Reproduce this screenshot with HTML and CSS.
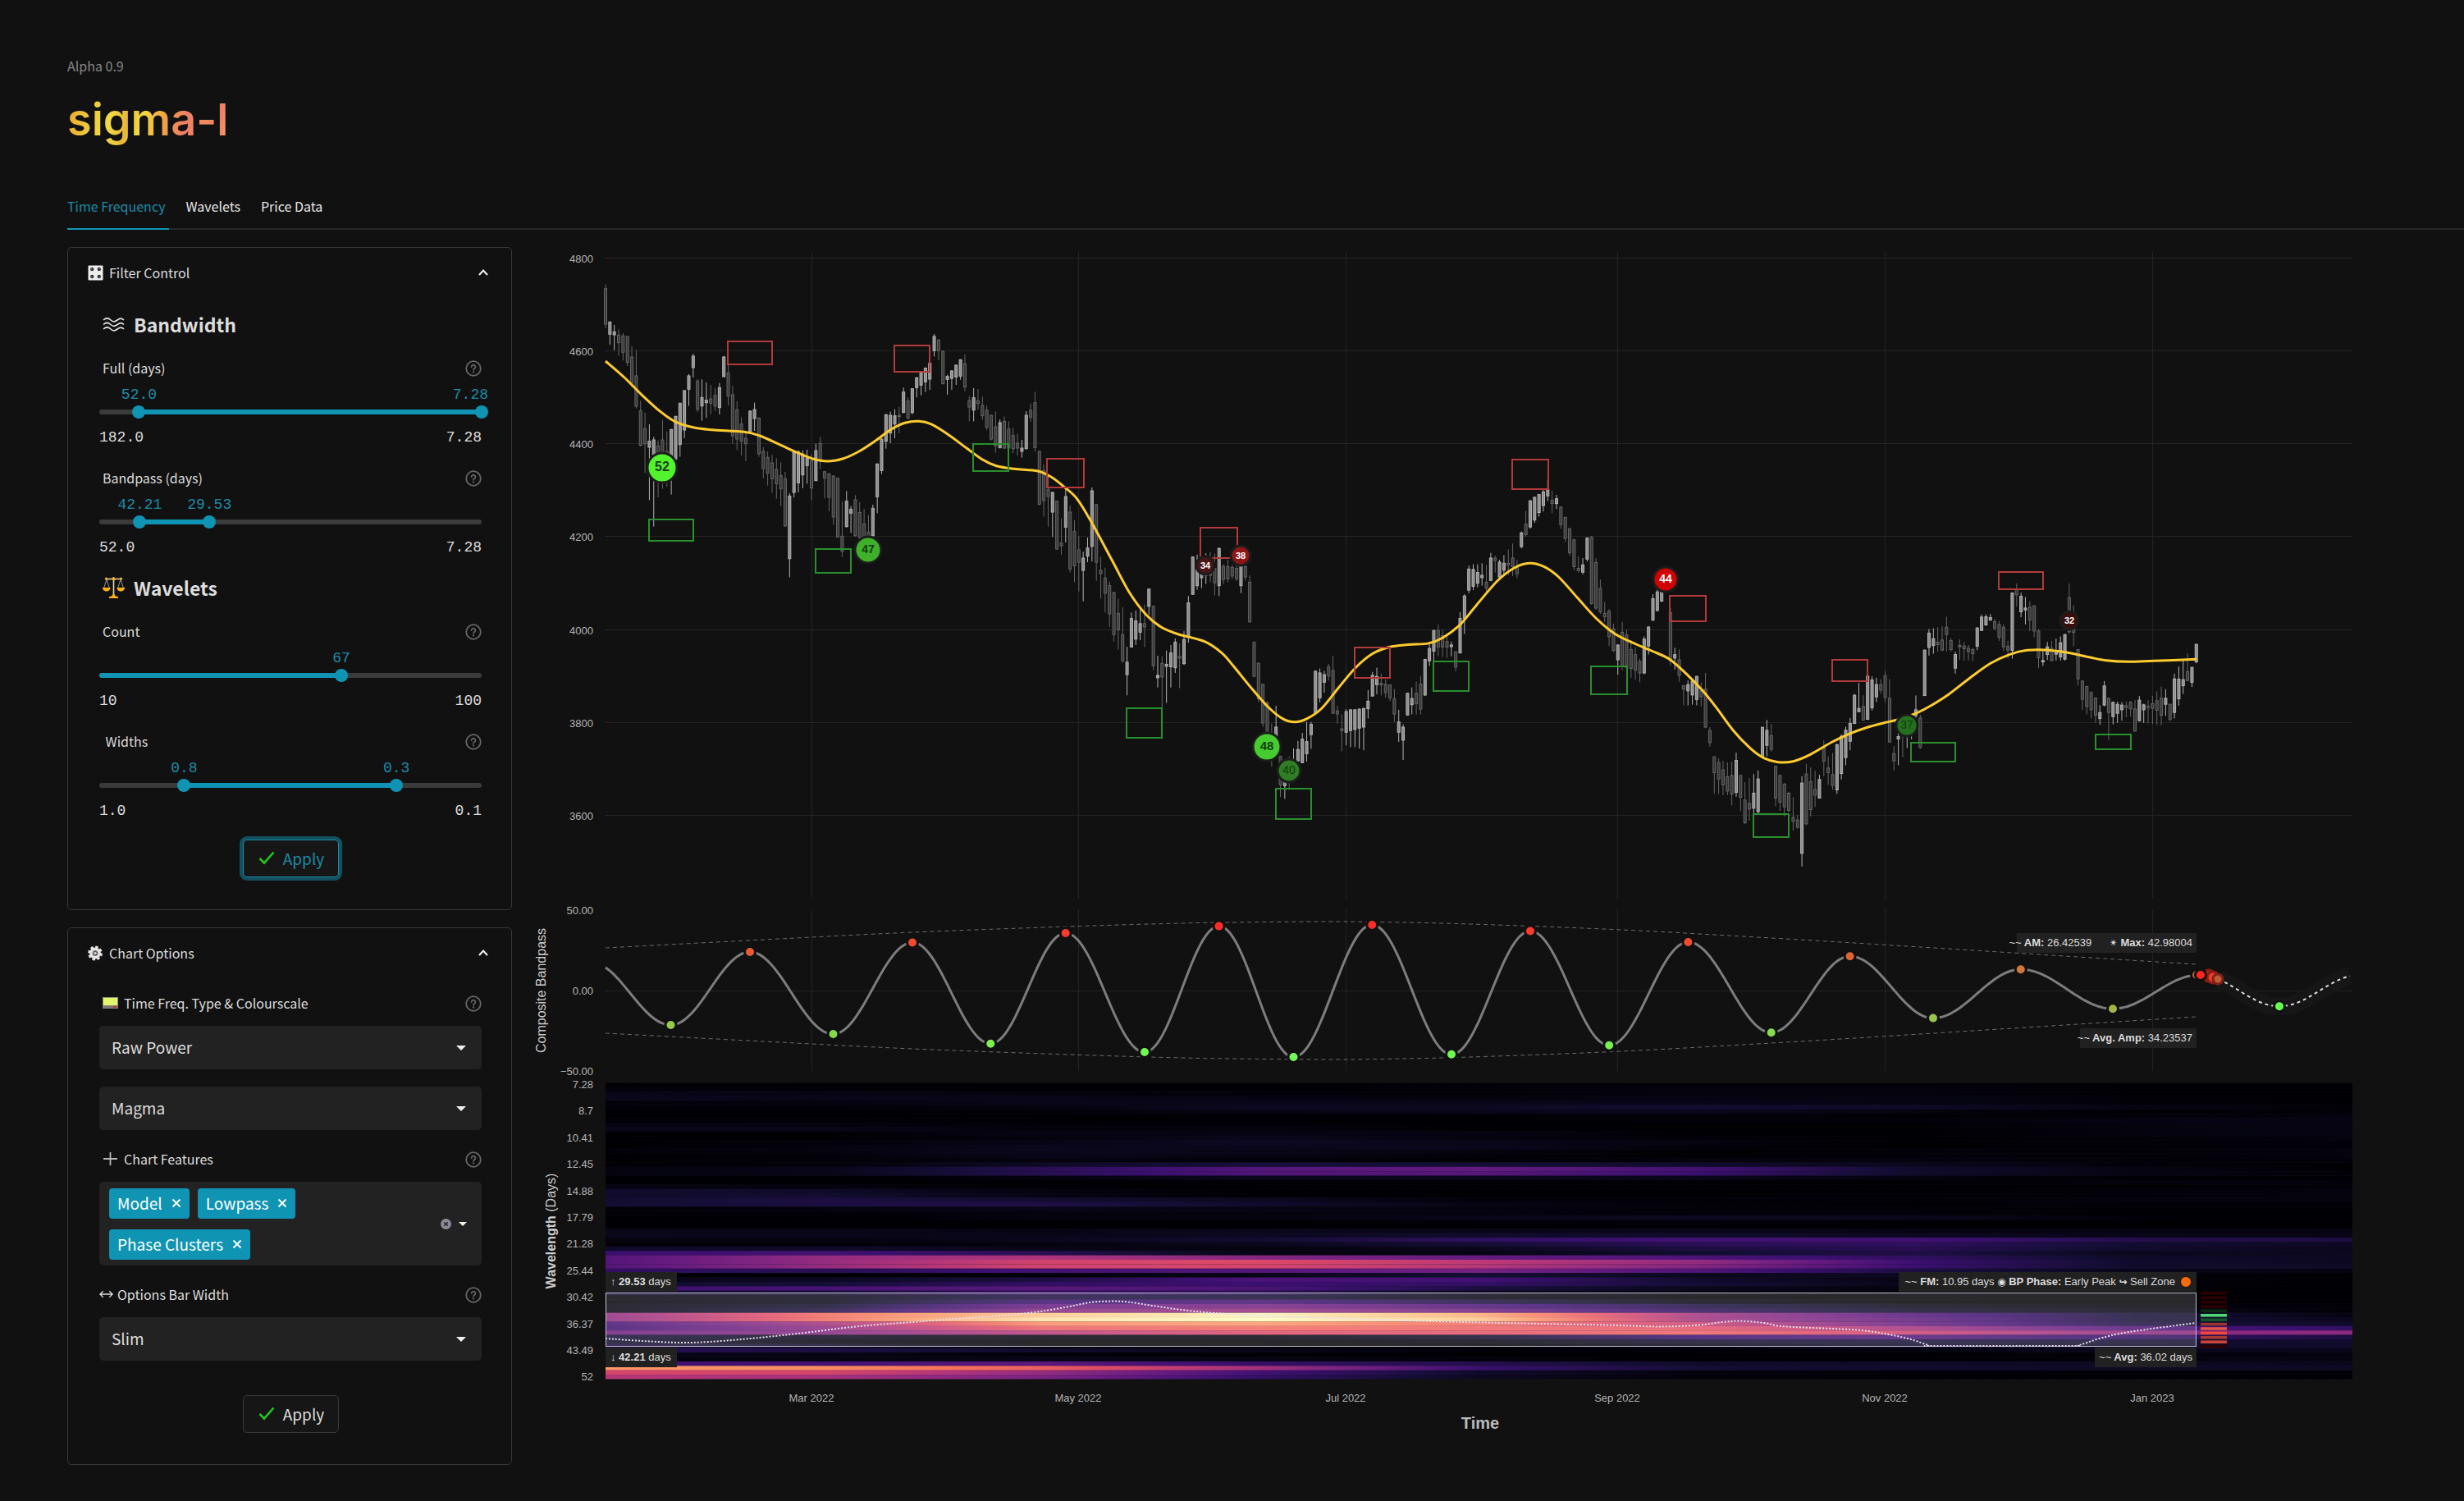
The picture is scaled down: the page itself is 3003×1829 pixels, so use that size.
FILE: index.html
```
<!DOCTYPE html>
<html lang="en">
<head>
  <meta charset="UTF-8" />
  <meta name="viewport" content="width=device-width, initial-scale=1.0"/>
  <title>sigma-l</title>
  <link rel="stylesheet" href="styles.css">
</head>
<body>

<svg width="0" height="0" class="defs" aria-hidden="true">
  <symbol id="help" viewBox="0 0 20 20">
    <circle cx="10" cy="10" r="8.8" fill="none" stroke="currentColor" stroke-width="1.8"/>
    <path d="M7.6 8.1a2.4 2.4 0 1 1 3.7 2c-.9.5-1.3.9-1.3 1.7" fill="none" stroke="currentColor" stroke-width="1.7" stroke-linecap="round"/>
    <circle cx="10" cy="14.4" r="1.1" fill="currentColor"/>
  </symbol>
  <symbol id="chevron" viewBox="0 0 14 10">
    <path d="M2 8l5-5.4L12 8" fill="none" stroke="currentColor" stroke-width="2.2"/>
  </symbol>
  <symbol id="caret" viewBox="0 0 12 6"><path d="M0 0h12L6 6z" fill="currentColor"/></symbol>
  <symbol id="cross" viewBox="0 0 12 12"><path d="M1.5 1.5l9 9m0-9l-9 9" fill="none" stroke="currentColor" stroke-width="1.9"/></symbol>
  <symbol id="check" viewBox="0 0 20 18">
    <path d="M1.5 10l5.5 5.5L18.5 2.5" fill="none" stroke="#1fc71f" stroke-width="2.6"/>
  </symbol>
</svg>

<header class="header">
  <p class="version">Alpha 0.9</p>
  <h1 class="logo">sigma-l</h1>
</header>

<nav class="tabs">
  <a class="tab active" href="#time-frequency">Time Frequency</a>
  <a class="tab" href="#wavelets">Wavelets</a>
  <a class="tab" href="#price-data">Price Data</a>
</nav>

<main class="main">
  <aside class="sidebar">

    <details class="panel" open>
      <summary>
        <svg class="icon-title" viewBox="0 0 19 19">
          <rect x=".5" y=".5" width="18" height="18" rx="1" fill="#eee"/>
          <g fill="#333"><circle cx="5.2" cy="5" r="2.2"/><circle cx="13.8" cy="5" r="2.2"/><circle cx="5.2" cy="14" r="2.2"/><circle cx="13.8" cy="14" r="2.2"/></g>
          <path d="M5 5l-2-2M14 5l2-2M5 14l-2 2M14 14l2 2" stroke="#999" stroke-width="1"/>
        </svg>
        Filter Control
        <svg class="chevron"><use href="#chevron"/></svg>
      </summary>
      <div class="panel-body">

        <h2>
          <svg class="icon-section" viewBox="0 0 27 28">
            <g fill="none" stroke="#ddd" stroke-width="1.7">
              <path d="M1 9c3-3 6-3 9 0s5 2 8 0 5-3 8 0"/>
              <path d="M1 14.5c3-3 6-3 9 0s5 2 8 0 5-3 8 0"/>
              <path d="M1 20c3-3 6-3 9 0s5 2 8 0 5-3 8 0"/>
            </g>
          </svg>
          Bandwidth
        </h2>

        <div class="field">
          <div class="field-label"><label for="full-min">Full (days)</label><svg class="help"><use href="#help"/></svg></div>
          <div class="values"><output style="left:10.4%">52.0</output><output class="at-end">7.28</output></div>
          <div class="slider">
            <div class="fill" style="left:10.4%;width:89.6%"></div>
            <input type="range" id="full-min" min="0" max="100" step="0.1" value="10.4">
            <input type="range" aria-label="Full (days), end" min="0" max="100" step="0.1" value="100">
          </div>
          <div class="limits"><span>182.0</span><span>7.28</span></div>
        </div>

        <div class="field">
          <div class="field-label"><label for="band-min">Bandpass (days)</label><svg class="help"><use href="#help"/></svg></div>
          <div class="values"><output style="left:10.6%">42.21</output><output style="left:28.8%">29.53</output></div>
          <div class="slider">
            <div class="fill" style="left:10.6%;width:18.2%"></div>
            <input type="range" id="band-min" min="0" max="100" step="0.1" value="10.6">
            <input type="range" aria-label="Bandpass (days), end" min="0" max="100" step="0.1" value="28.8">
          </div>
          <div class="limits"><span>52.0</span><span>7.28</span></div>
        </div>

        <h2>
          <svg class="icon-section" viewBox="0 0 27 28">
            <path d="M13.5 1v23M4 3.5h19" stroke="#e8dcc0" stroke-width="1.6"/>
            <path d="M5 4L1.5 15M5 4l3.5 11M22 4l-3.5 11M22 4l3.5 11" stroke="#99978f" stroke-width="1" fill="none"/>
            <g fill="#fbb017"><path d="M0 14h9.500c0 6-9.500 6-9.500 0zM17.500 14h9.500c0 6-9.500 6-9.500 0zM8 27v-2c3 0 4-1 4.500-3h2c.5 2 1.500 3 4.500 3v2z"/><circle cx="4.5" cy="3.2" r="1.6"/><circle cx="22.5" cy="3.2" r="1.6"/><circle cx="13.5" cy="3.5" r="2"/></g>
          </svg>
          Wavelets
        </h2>

        <div class="field">
          <div class="field-label"><label for="count">Count</label><svg class="help"><use href="#help"/></svg></div>
          <div class="values"><output style="left:63.3%">67</output></div>
          <div class="slider">
            <div class="fill" style="left:0;width:63.3%"></div>
            <input type="range" id="count" min="10" max="100" value="67">
          </div>
          <div class="limits"><span>10</span><span>100</span></div>
        </div>

        <div class="field">
          <div class="field-label"><label for="widths-min">&nbsp;Widths</label><svg class="help"><use href="#help"/></svg></div>
          <div class="values"><output style="left:22.2%">0.8</output><output style="left:77.7%">0.3</output></div>
          <div class="slider">
            <div class="fill" style="left:22.2%;width:55.5%"></div>
            <input type="range" id="widths-min" min="0" max="100" step="0.1" value="22.2">
            <input type="range" aria-label="Widths, end" min="0" max="100" step="0.1" value="77.7">
          </div>
          <div class="limits"><span>1.0</span><span>0.1</span></div>
        </div>

        <button type="button" class="apply focused"><svg class="check"><use href="#check"/></svg>Apply</button>
      </div>
    </details>

    <details class="panel options" open>
      <summary>
        <svg class="icon-title" viewBox="0 0 19 19">
          <circle cx="9" cy="9.5" r="7.4" fill="none" stroke="#e6e6e6" stroke-width="3" stroke-dasharray="3.4 2.41"/>
          <circle cx="9" cy="9.5" r="5.2" fill="#777" stroke="#e6e6e6" stroke-width="3.4"/>
          <circle cx="9" cy="9.5" r="2.2" fill="#ccc" stroke="#555" stroke-width="1"/>
        </svg>
        Chart Options
        <svg class="chevron"><use href="#chevron"/></svg>
      </summary>
      <div class="panel-body">

        <div class="field-label">
          <label for="tf-type">
            <svg class="icon-label" viewBox="0 0 19 14"><rect width="19" height="14" fill="#8c8f7a"/><rect x="1" y="1" width="17" height="9" fill="#e3f56b"/><path d="M0 12h19" stroke="#777" stroke-width="3"/><rect x="13" y="11" width="4" height="2" fill="#b33"/></svg>
            Time Freq. Type &amp; Colourscale
          </label>
          <svg class="help"><use href="#help"/></svg>
        </div>
        <div class="select"><select id="tf-type"><option>Raw Power</option></select><svg class="caret"><use href="#caret"/></svg></div>
        <div class="select second"><select aria-label="Colourscale"><option>Magma</option></select><svg class="caret"><use href="#caret"/></svg></div>

        <div class="field-label spaced">
          <span id="features-label">
            <svg class="icon-label" viewBox="0 0 19 18"><path d="M9.5 0v18M0 9h19" stroke="#b8b8b8" stroke-width="2"/></svg>
            Chart Features
          </span>
          <svg class="help"><use href="#help"/></svg>
        </div>
        <div class="multi" role="group" aria-labelledby="features-label">
          <div class="tags">
            <span class="tag">Model<button type="button" aria-label="Remove Model"><svg><use href="#cross"/></svg></button></span>
            <span class="tag">Lowpass<button type="button" aria-label="Remove Lowpass"><svg><use href="#cross"/></svg></button></span>
            <span class="tag">Phase Clusters<button type="button" aria-label="Remove Phase Clusters"><svg><use href="#cross"/></svg></button></span>
          </div>
          <button type="button" class="clear" aria-label="Clear all"><svg viewBox="0 0 14 14"><circle cx="7" cy="7" r="7" fill="#8b8b99"/><path d="M4.5 4.5l5 5m0-5l-5 5" stroke="#222" stroke-width="1.5"/></svg></button>
          <svg class="caret small"><use href="#caret"/></svg>
        </div>

        <div class="field-label spaced flush">
          <label for="bar-width">
            <svg class="icon-label arrow" viewBox="0 0 18 10"><path d="M1 5h16M5 1L1 5l4 4M13 1l4 4-4 4" fill="none" stroke="#ddd" stroke-width="1.4"/></svg>
            Options Bar Width
          </label>
          <svg class="help"><use href="#help"/></svg>
        </div>
        <div class="select"><select id="bar-width"><option>Slim</option></select><svg class="caret"><use href="#caret"/></svg></div>

        <button type="button" class="apply"><svg class="check"><use href="#check"/></svg>Apply</button>
      </div>
    </details>

  </aside>

  <svg id="chart" class="chart" viewBox="648 301 2255 1460" role="img" aria-label="Price, composite bandpass and time frequency charts"></svg>
</main>

<script src="chart.js"></script>
</body>
</html>
```
FILE: styles.css
```
* {
  box-sizing: border-box;
}

body {
  margin: 0;
  background: #111111;
  color: #dddddd;
  font-family: "Noto Sans CJK SC", "Open Sans", sans-serif;
  font-size: 16px;
  line-height: 24px;
}

.defs {
  position: absolute;
}

.header {
  padding: 68px 82px 0;
}

.version {
  margin: 0;
  color: #888888;
}

.logo {
  display: inline-block;
  margin: 16px 0 0;
  font-family: Inter, sans-serif;
  font-size: 54px;
  font-weight: 600;
  line-height: 76px;
  color: transparent;
  background: linear-gradient(100deg, #e8a32c 0%, #eec63a 14%, #f0da45 28%, #e9b636 38%, #f2dc3f 46%, #f0a240 60%, #ee7f63 72%, #f08a5e 84%, #f07f62 92%, #f0b060 100%);
  background-clip: text;
  -webkit-background-clip: text;
}

/* tabs */

.tabs {
  display: flex;
  gap: 21px;
  margin: 52px 0 0 82px;
  border-bottom: 2px solid #282828;
}

.tab {
  height: 44px;
  margin-bottom: -2px;
  padding: 3px 4px 0 0;
  color: #e6e6e6;
  text-decoration: none;
}

.tab.active {
  color: #1c8ba8;
  border-bottom: 2px solid #1094b4;
}

.main {
  display: flex;
  align-items: flex-start;
  gap: 24px;
  padding: 21px 100px 42px 82px;
}

.sidebar {
  flex: 0 0 542px;
}

.chart {
  flex: 1;
  min-width: 0;
  display: block;
  font-family: "Liberation Sans", Arial, sans-serif;
  font-size: 13px;
}

/* panels */

.panel {
  margin-bottom: 21px;
  border: 1px solid #383838;
  border-radius: 5px;
}

.panel:last-child {
  margin-bottom: 0;
}

summary {
  display: flex;
  align-items: center;
  gap: 7px;
  height: 62px;
  padding: 0 27px 2px 24px;
  list-style: none;
  cursor: pointer;
}

.panel-body {
  padding: 16px 36px 39px 38px;
}

.options .panel-body {
  padding: 18px 36px 38px 38px;
}

.icon-title {
  width: 19px;
  height: 19px;
}

.chevron {
  width: 14px;
  height: 10px;
  margin-left: auto;
  color: #eeeeee;
}

h2 {
  display: flex;
  align-items: center;
  gap: 11px;
  height: 32px;
  margin: 0 0 25px;
  padding: 0 0 2px 4px;
  font-size: 23px;
  font-weight: 700;
}

.field + h2 {
  margin-top: 24px;
}

.icon-section {
  width: 27px;
  height: 28px;
}

/* sliders */

.field + .field {
  margin-top: 28px;
}

.field-label {
  display: flex;
  align-items: center;
  justify-content: space-between;
  height: 24px;
  padding-left: 4px;
}

.field-label label,
.field-label span {
  display: flex;
  align-items: center;
  gap: 7px;
  padding-bottom: 3px;
}

.field-label.flush {
  padding-left: 0;
}

.field-label.spaced {
  margin-top: 24px;
}

.help {
  width: 20px;
  height: 20px;
  color: #666666;
}

.icon-label {
  width: 19px;
  height: 16px;
}

.icon-label.arrow {
  width: 17px;
}

.flush label {
  gap: 5px;
}

.values {
  position: relative;
  height: 20px;
  margin-top: 10px;
}

.values output {
  position: absolute;
  transform: translateX(-50%);
  color: #1c8ba8;
}

.values output.at-end {
  right: -8px;
  transform: none;
}

.values,
.limits {
  font-family: "Liberation Mono", monospace;
  font-size: 18px;
  line-height: 20px;
}

.slider {
  position: relative;
  height: 20px;
}

.slider::before,
.fill {
  content: "";
  position: absolute;
  top: 8px;
  height: 6px;
  border-radius: 3px;
}

.slider::before {
  left: 0;
  width: 100%;
  background: #3b3b3b;
}

.fill {
  background: #1094b4;
}

.slider input {
  position: absolute;
  top: 1px;
  left: -8px;
  width: calc(100% + 16px);
  height: 20px;
  margin: 0;
  background: none;
  appearance: none;
  -webkit-appearance: none;
  pointer-events: none;
}

.slider input::-webkit-slider-thumb {
  width: 16px;
  height: 16px;
  border-radius: 50%;
  background: #1094b4;
  appearance: none;
  -webkit-appearance: none;
  pointer-events: auto;
}

.limits {
  display: flex;
  justify-content: space-between;
  margin-top: 12px;
}

/* selects */

.select {
  position: relative;
  margin-top: 15px;
}

.select.second {
  margin-top: 21px;
}

select {
  display: block;
  width: 100%;
  height: 53px;
  padding: 0 15px 2px;
  border: 0;
  border-radius: 5px;
  background: #222222;
  color: #dddddd;
  font-family: inherit;
  font-size: 19px;
  appearance: none;
  -webkit-appearance: none;
}

.caret {
  position: absolute;
  top: 24px;
  right: 19px;
  width: 12px;
  height: 6px;
  color: #eeeeee;
  pointer-events: none;
}

.caret.small {
  position: static;
  width: 10px;
  height: 5px;
}

.multi {
  display: flex;
  align-items: center;
  gap: 9px;
  min-height: 102px;
  margin-top: 15px;
  padding: 6px 18px 6px 12px;
  border-radius: 5px;
  background: #222222;
}

.tags {
  flex: 1;
  display: flex;
  flex-wrap: wrap;
  gap: 13px 10px;
  padding-right: 120px;
}

.tag {
  display: flex;
  align-items: center;
  gap: 11px;
  height: 37px;
  padding: 0 10px 1px;
  border-radius: 4px;
  background: #1094b4;
  color: #ffffff;
  font-size: 19px;
}

.tag button,
.clear {
  display: flex;
  padding: 0;
  border: 0;
  background: none;
  color: inherit;
}

.tag svg {
  width: 12px;
  height: 12px;
}

.clear svg {
  width: 13px;
  height: 13px;
}

.apply {
  display: flex;
  align-items: center;
  justify-content: center;
  gap: 10px;
  width: 117px;
  height: 46px;
  margin: 25px auto 0;
  padding: 0 0 2px 2px;
  border: 1px solid #3a3a3a;
  border-radius: 5px;
  background: #161616;
  color: #dddddd;
  font-family: inherit;
  font-size: 19px;
}

.options .apply {
  margin-top: 42px;
}

.apply.focused {
  border-color: #1c8ba8;
  color: #1c8ba8;
  box-shadow: 0 0 0 4px #12505f;
}

.check {
  width: 20px;
  height: 18px;
}

/* chart */

.chart text {
  fill: #b4b4b4;
}

.grid {
  stroke: #242424;
  stroke-width: 1;
}

.chart .axis-title {
  font-size: 16px;
  fill: #cccccc;
}

.chart .time-title {
  font-size: 20px;
  font-weight: 700;
  fill: #bbbbbb;
}

.up {
  fill: #8e8e8e;
  stroke: #b4b4b4;
}

.down {
  fill: #3a3a3a;
  stroke: #666666;
}

.lowpass {
  fill: none;
  stroke: #fccb2e;
  stroke-width: 3;
}

.sell {
  fill: none;
  stroke: #b23a3a;
  stroke-width: 2;
}

.buy {
  fill: none;
  stroke: #28902c;
  stroke-width: 2;
}

.wave {
  fill: none;
  stroke: #7d7d7d;
  stroke-width: 3;
}

.envelope {
  fill: none;
  stroke: #6c6c6c;
  stroke-dasharray: 5 4;
}

.forecast {
  fill: none;
  stroke: #dddddd;
  stroke-width: 2;
  stroke-dasharray: 4 4;
}

.forecast-band {
  fill: none;
  stroke: #161616;
  stroke-width: 22;
}

.band {
  fill: #ffffff;
  fill-opacity: 0.16;
  stroke: #c4bccc;
  stroke-width: 1;
}

.mean-freq {
  fill: none;
  stroke: #eadff0;
  stroke-width: 2;
  stroke-dasharray: 2 2;
}

.note {
  fill: #212121;
}

.chart .note-text {
  fill: #dddddd;
  white-space: pre;
}

.note-text tspan {
  font-weight: 700;
}

.note-text .sign {
  font-family: "DejaVu Sans", sans-serif;
  font-size: 12px;
}
```
FILE: chart.js
```
const svg = document.getElementById('chart');
const X0 = 738, DAY = 5.341, RIGHT = 2867;

const dayX = d => X0 + d * DAY;
const priceY = p => 315.3 + (4800 - p) * 0.566;

function add(tag, attrs, text, parent) {
  const el = document.createElementNS('http://www.w3.org/2000/svg', tag);
  for (const k in attrs) el.setAttribute(k, attrs[k]);
  if (text !== undefined) el.textContent = text;
  (parent || svg).appendChild(el);
  return el;
}

function path(points) {
  let d = 'M' + points[0];
  for (let i = 0; i < points.length - 1; i++) {
    const a = points[i - 1] || points[i], b = points[i], c = points[i + 1], e = points[i + 2] || c;
    d += `C${b[0] + (c[0] - a[0]) / 6} ${b[1] + (c[1] - a[1]) / 6} ${c[0] - (e[0] - b[0]) / 6} ${c[1] - (e[1] - b[1]) / 6} ${c[0]} ${c[1]}`;
  }
  return d;
}

const pairs = s => s.trim().split(/\s+/).map(p => p.split(',').map(Number));

// grid and axis labels
const months = [[989, 'Mar 2022'], [1314, 'May 2022'], [1640, 'Jul 2022'], [1971, 'Sep 2022'], [2297, 'Nov 2022'], [2623, 'Jan 2023']];
months.forEach(([x, label]) => {
  add('path', { class: 'grid', d: `M${x}.5 307V1095M${x}.5 1108V1305` });
  add('text', { x, y: 1708, 'text-anchor': 'middle' }, label);
});
for (let p = 4800; p >= 3600; p -= 200) {
  const y = Math.floor(priceY(p)) - 0.5;
  add('path', { class: 'grid', d: `M${X0} ${y}H${RIGHT}` });
  add('text', { x: 723, y: Math.round(y + 5), 'text-anchor': 'end' }, p);
}
add('path', { class: 'grid', d: `M${X0} 1207.5H${RIGHT}` });
[['50.00', 1114], ['0.00', 1212], ['−50.00', 1310]].forEach(([t, y]) => add('text', { x: 723, y, 'text-anchor': 'end' }, t));

// candles: high, body top, body bottom, low in steps below the base price
const segments = [
  { day: 0, base: 4844.8, step: 0.5891, rows: `170 185 315 330 d,305 307 352 390 u,318 343 354 410 u,334 355 383 430 d,348 358 418 448 d,358 360 455 468 d,395 435 530 545 d,410 504 615 623 d,595 632 758 762 d,638 697 752 860 d,681 743 765 958 u,727 738 880 1055 u,740 760 860 948 d,665 738 880 917 d,707 780 870 910 d,698 700 850 938 u,650 652 808 870 u,602 604 755 800 u,556 558 702 732 u,498 504 553 614 u,423 432 474 510 u,516 523 626 636 d,517 583 614 668 u,528 593 602 657 u,537 588 604 645 d,548 575 614 632 d,530 547 620 645 u,431 435 507 508 u,455 493 578 612 d,540 573 723 752 d,597 628 735 775 d,655 680 742 795 d,705 732 752 815 d,630 633 707 712 u,602 627 660 705 u,656 658 788 800 d,765 780 843 878 d,780 802 860 905 d,792 822 880 932 d,805 846 898 953 d,820 868 917 980 d,855 880 1052 1057 d,933 943 1172 1240 u,780 783 930 948 u,776 782 895 930 u,776 790 866 915 u,774 806 832 898 u,790 815 914 958 d,752 777 887 888 u,727 751 815 845 d,852 854 878 952 d,860 862 948 998 d,868 870 1020 1048 d,876 878 1093 1095 d,963 1090 1145 1166 d,925 962 1055 1058 u,980 992 1006 1078 u,940 957 1088 1092 d,965 1003 1095 1100 d,990 1045 1095 1100 d,1013 1075 1100 1110 d,975 988 1088 1095 u,824 826 946 1006 u,733 735 850 863 u,643 646 743 770 u,635 648 713 750 u,626 650 680 732 u,617 648 653 714 d,547 563 638 640 u,583 596 658 662 d,549 551 638 645 u,508 511 547 583 u,488 492 538 575 u,473 476 526 563 u,455 458 516 555 u,351 360 412 433 u,370 373 412 447 d,410 415 533 535 d,500 506 517 573 u,483 486 513 555 u,462 465 508 537 u,443 445 505 518 u,426 460 545 560 d,578 594 618 670 d,549 584 629 670 u,552 595 605 628 d,580 612 650 665 d,613 630 692 703 d,645 648 735 740 d,635 690 760 785 d,663 675 767 768 u,652 670 768 772 d,670 698 768 775 d,694 722 770 787 d,715 750 768 795 d,738 768 780 803 u,633 648 770 773 u,605 630 655 672 d,562 602 766 782 d,778 780 973 978 d,828 850 960 1018 d,868 920 945 1055 d,928 930 1002 1093 u,960 962 1137 1140 d,1025 1115 1125 1158 d,912 945 1057 1113 u,978 1002 1210 1222 d,1032 1072 1198 1258 d,1090 1140 1185 1292 d,1147 1170 1215 1328 u,1095 1133 1163 1185 u,912 924 1127 1182 u,972 975 1185 1253 d,1165 1215 1227 1318 d` },
  { day: 114, base: 4579, step: 0.7427, rows: `598 628 672 728 d,638 650 732 770 d,668 670 792 812 d,688 730 778 835 d,712 792 868 873 d,827 872 908 968 u,728 745 828 829 u,722 752 805 822 u,720 760 785 808 u,705 760 770 828 d,658 660 710 735 u,708 710 882 895 d,853 910 917 945 u,855 875 915 1028 d,838 878 884 990 u,822 845 885 945 u,803 814 888 903 u,818 855 860 947 d,782 806 876 880 u,680 700 798 815 u,565 567 675 677 u,560 600 650 662 u,575 585 627 657 u,556 580 620 645 u,553 570 620 640 d,557 600 642 678 d,540 542 650 680 u,588 594 632 645 d,575 595 630 640 d,590 597 622 632 d,560 600 630 637 d,560 585 650 672 u,580 595 625 635 d,620 640 755 757 d,812 814 913 915 d,873 875 978 988 d,934 936 1048 1060 d,985 990 1075 1078 d,1050 1080 1150 1175 d,998 1060 1100 1120 u,1143 1145 1227 1263 d,1160 1175 1230 1268 u,1145 1170 1215 1242 d,1122 1160 1180 1200 u,1100 1125 1158 1160 u,1077 1095 1163 1165 u,1045 1102 1137 1160 u,1045 1052 1082 1123 u,896 898 1018 1020 u,890 903 975 988 u,897 908 930 960 u,877 885 912 925 d,853 896 1020 1022 d,998 1013 1022 1050 d,1023 1065 1070 1130 d,1008 1015 1075 1113 u,1008 1010 1070 1118 u,1008 1010 1067 1118 u,1006 1008 1063 1122 u,1004 1006 1060 1127 u,953 985 1007 1035 u,900 910 970 972 u,888 913 937 965 u,905 933 938 968 d,922 936 960 975 d,936 938 975 985 d,950 978 1022 1045 d,1010 1045 1075 1103 u,1052 1060 1098 1155 u,960 962 1025 1027 u,945 977 995 1023 u,928 962 992 1023 d,912 935 1008 1023 d,862 864 967 970 u,818 832 868 883 u,778 780 840 873 u,763 780 828 855 d,778 795 828 857 d,790 812 828 860 d,812 822 827 855 u,840 842 886 898 d,727 745 845 847 u,675 680 745 790 u,592 602 663 672 u,588 603 652 663 u,588 612 643 655 u,585 620 627 650 u,590 640 657 672 d,555 570 635 637 u,563 570 577 612 d,575 582 625 628 u,562 585 605 622 u,545 585 590 620 d,528 570 595 622 d,575 595 615 628 d,493 497 537 542 u,433 472 502 508 d,402 404 480 485 u,392 394 460 468 u,384 386 438 450 u,373 378 418 435 u,343 372 390 405 u,375 402 412 440 d,387 398 412 428 u,420 422 473 485 d,450 452 513 523 d,483 485 555 563 d,515 517 595 605 d,565 600 606 612 d,570 590 611 617 u,510 512 573 580 u,506 510 702 705 d,570 583 715 720 d,632 658 726 732 d,697 730 740 755 d,718 724 798 825 d,760 775 838 842 d,820 822 865 908 u,755 785 885 895 d,778 793 887 905 d,808 835 890 917 d,828 850 895 923 d,862 870 903 930 d,797 805 903 907 u,767 770 825 850 u,675 688 750 752 u,655 668 722 725 u,645 655 695 697 u,640 645 665 667 d,715 728 868 882 d,830 850 860 893 u,835 865 910 928 d,938 940 950 997 d,925 937 955 997 u,920 927 967 995 u,912 913 980 997 u,930 955 972 1000 d,903 950 1060 1063 d,1060 1070 1105 1117 d` },
  { day: 253, base: 4367.8, step: 0.5888, rows: `1085 1087 1145 1222 d,1093 1108 1168 1223 d,1102 1135 1190 1227 d,1107 1160 1212 1227 d,1105 1155 1223 1265 d,1072 1100 1217 1233 u,1153 1155 1235 1285 d,1180 1245 1328 1332 d,1165 1257 1278 1320 d,1150 1220 1275 1300 u,1137 1168 1288 1293 u,978 979 1085 1090 u,952 990 1045 1085 u,967 1010 1060 1068 d,1120 1122 1238 1267 d,1152 1155 1253 1285 d,1183 1187 1270 1305 d,1215 1220 1283 1290 d,1235 1308 1323 1357 d,1300 1318 1345 1350 d,1158 1183 1440 1488 u,1113 1150 1332 1337 d,1125 1178 1280 1305 d,1138 1207 1227 1270 d,1153 1170 1238 1240 u,1027 1055 1103 1158 d,1085 1128 1145 1190 d,1073 1152 1192 1208 d,1038 1043 1208 1223 u,1005 1012 1148 1170 u,977 990 1090 1118 u,945 965 1030 1063 u,857 862 965 967 u,817 910 922 924 u,862 903 953 955 d,788 792 950 952 u,793 806 908 918 u,798 823 868 887 u,803 823 843 857 d,773 790 870 887 d,803 873 1033 1035 d,1048 1075 1102 1137 d,1000 1013 1022 1118 u,985 1000 1010 1088 d,990 1000 1010 1055 u,960 975 1000 1023 u,863 915 937 945 u,933 945 1053 1058 d,695 697 863 865 u,620 635 687 717 u,617 655 680 710 u,613 668 677 703 d,610 660 697 700 d,575 613 640 703 d,653 662 695 702 d,703 713 763 783 u,658 680 685 733 d,668 682 692 735 d,678 690 702 735 d,690 695 710 737 d,613 616 683 697 u,567 576 625 627 u,566 575 605 607 u,565 578 587 590 u,583 593 617 625 d,590 603 650 663 d,603 613 685 700 d,663 683 697 728 d,486 488 698 728 u,453 475 495 538 d,487 500 557 577 u,503 543 550 603 u,518 540 587 627 d,533 535 627 650 d,620 627 725 763 d,695 735 740 755 u,667 685 713 733 u,663 690 735 738 d,655 700 712 735 u,647 670 722 735 u,638 640 730 735 u,453 505 630 637 d,533 560 632 683 d,693 695 802 827 d,808 810 877 915 d,828 830 903 932 d,848 852 915 947 d,870 872 935 963 d,898 925 947 970 u,810 828 898 902 u,872 873 925 1025 d,885 888 940 968 u,885 895 928 963 u,887 898 915 955 u,885 900 907 942 d,883 888 912 940 d,880 912 993 995 d,865 880 955 958 u,893 897 915 963 u,880 903 906 965 d,865 893 910 967 d,848 882 917 970 d,830 873 935 972 d,840 873 895 937 u,893 895 950 958 d,783 802 925 947 u,757 803 875 900 u,733 805 827 857 u,708 775 808 812 d,758 760 815 832 u,673 676 740 745 u` }
];
segments.forEach(s => s.rows.split(',').forEach((row, i) => {
  const v = row.split(' ');
  const [h, t, b, l] = v.slice(0, 4).map(n => priceY(s.base - n * s.step));
  const x = dayX(s.day + i);
  const g = add('g', { class: v[4] === 'u' ? 'up' : 'down' });
  add('path', { d: `M${x} ${h}V${t}M${x} ${b}V${l}` }, undefined, g);
  add('rect', { x: x - 1.5, y: t, width: 3, height: b - t }, undefined, g);
}));

// peak and trough projection boxes: x1, x2, y1, y2
const boxes = {
  sell: [[887, 941, 416, 444], [1090, 1133, 421, 453], [1276, 1321, 559, 594], [1463, 1508, 643, 680], [1843, 1887, 560, 596], [1651, 1694, 789, 826], [2035, 2079, 726, 757], [2233, 2276, 804, 830], [2436, 2490, 697, 718]],
  buy: [[791, 845, 633, 659], [994, 1037, 669, 698], [1186, 1229, 541, 574], [1373, 1416, 863, 899], [1555, 1598, 961, 998], [1747, 1790, 806, 842], [1939, 1983, 812, 846], [2137, 2180, 992, 1020], [2329, 2383, 905, 928], [2554, 2597, 895, 913]]
};

add('path', { class: 'lowpass', d: path(pairs(`738,440 761,460 781,480 805,501.7 824,514.3 846,521 868,523.7 907,526.3 926,531 950,541.7 974.5,552.7 991.4,559.3 1008.4,562 1027.8,558.7 1047,550 1066.6,537.3 1086,523.3 1103,515.3 1120,513.3 1134.4,516.7 1153.8,528.3 1178,546 1197.4,560 1214.4,567.7 1236,571.3 1265,574 1282,581.7 1297,593.3 1313,608.3 1330.6,637 1356,684 1376.5,722 1397,749.3 1415,764 1435,772.5 1468,781.7 1489,795.6 1504,812.5 1524.5,837.7 1545,861 1563,875.6 1578,879.8 1593,875.6 1611,863 1631.6,837.7 1652,813.7 1672,797 1693,788.5 1716,785.5 1741,783.9 1759,776.7 1779.6,761 1800,736.7 1825.5,707.3 1846,691.7 1864,686.2 1881.6,690.4 1899.5,703 1922.4,728.3 1945.4,753.5 1968.4,772.5 1994,785 2014,793.5 2034.7,803.2 2055,820.9 2075.5,842 2091.4,861.7 2112.3,890 2133,911.7 2149,923.3 2167,928.7 2185.5,927.7 2206.4,919.3 2232.6,904.3 2253.5,894.3 2274.4,886.7 2295.4,881 2316,876 2337,868.3 2353,860 2374,846.7 2400,826.7 2426,808.3 2449.6,797.3 2470.6,792.3 2494,792 2520,795.3 2546,800.7 2567,804.7 2593.5,806.3 2625,805.3 2677,803.3`)) });

for (const type in boxes) {
  boxes[type].forEach(([x1, x2, y1, y2]) => add('rect', { class: type, x: x1, y: y1, width: x2 - x1, height: y2 - y1 }));
}

// phase clusters: x, y, radius, fill, label, text colour, text size, weight
[
  [807, 570, 17, '#52f22f', 52, '#1d3d16', 16, 700], [1058, 670, 15, '#3fb02a', 47, '#123d0c', 14, 700],
  [1544, 910, 16, '#46cc2e', 48, '#123d0c', 15, 700], [1571, 939, 13, '#2f7d24', 40, '#123d0c', 14, 400],
  [1469, 689, 10, '#4a1616', 34, '#ffffff', 11, 700], [1512, 677, 11, '#8f1616', 38, '#ffffff', 11, 700],
  [2030, 706, 14, '#d00202', 44, '#ffffff', 14, 700], [2522, 756, 10, '#3b0e0e', 32, '#ffffff', 11, 700],
  [2324, 884, 12, '#24701f', 37, '#123d0c', 14, 400]
].forEach(([x, y, r, fill, label, color, size, weight]) => {
  add('circle', { cx: x, cy: y, r: r + 1, fill, stroke: '#1c1c1c', 'stroke-width': 3 });
  add('text', { x, y: y + 4, 'text-anchor': 'middle', style: `fill:${color};font-size:${size}px;font-weight:${weight}` }, label);
});

// composite bandpass
const extrema = pairs(`719,1172 817.5,1249 914,1160 1015.5,1260 1112,1148.5 1207.3,1271.7 1298.7,1137 1395,1282 1485.6,1128.6 1576.5,1288 1672.2,1127 1769,1284.8 1865,1134.5 1961.2,1273.8 2057.4,1148 2158.7,1258.2 2254.6,1165.2 2356,1240.6 2462.8,1181.2 2575,1229.2 2680,1188 2778,1226.3 2876,1188`);
function wave(from, to) {
  const pts = [];
  for (let x = from; x <= to; x += 4) {
    const i = extrema.findIndex((e, n) => n + 1 < extrema.length && x < extrema[n + 1][0]);
    const [a, b] = [extrema[i], extrema[i + 1]];
    pts.push([x, a[1] + (b[1] - a[1]) * (1 - Math.cos(Math.PI * (x - a[0]) / (b[0] - a[0]))) / 2]);
  }
  return path(pts);
}
const envelope = pairs('738,1155 931,1145 1112,1136 1314,1128.6 1440,1125 1496,1124 1606,1123 1687,1123.6 1792,1126 1972,1132.8 2150,1142.5 2297,1151.3 2676,1175');
add('path', { class: 'envelope', d: path(envelope) });
add('path', { class: 'envelope', d: path(envelope.map(([x, y]) => [x, 2414 - y])) });
add('path', { class: 'forecast-band', d: wave(2704, 2864) });
add('path', { class: 'wave', d: wave(738, 2680) });
add('path', { class: 'forecast', d: wave(2704, 2864) });

const markerColors = ['', '#94cc4a', '#ea5b30', '#86d94c', '#f04a2f', '#7bf04f', '#fb3b2d', '#72f850', '#ff2d28', '#6eff52', '#ff2b27', '#70fa50', '#fc3a2d', '#78f04f', '#ee4c2f', '#86dc4c', '#dd6534', '#98c54b', '#d27839', '#a5b545', '#b86a35', '#62ff4e'];
function marker(x, y, fill, stroke, r) {
  add('circle', { cx: x, cy: y, r: r || 6.5, fill, stroke: stroke || '#111111', 'stroke-width': 3 });
}
extrema.forEach(([x, y], i) => markerColors[i] && marker(x - (i === 20 ? 3 : 0), y, markerColors[i]));
marker(2692, 1189, '#d92a1c', '#8c1c14', 7);
marker(2697, 1191, '#f03a28', '#8c1c14', 7);
marker(2703, 1193, '#c05a35', '#7c2218', 6);
marker(2682, 1188, '#ff2424');

add('text', { class: 'axis-title', 'text-anchor': 'middle', transform: 'translate(665 1207) rotate(-90)' }, 'Composite Bandpass');

// time frequency heatmap, power in percent at nine dates for each wavelength
const power = `0 0 0 0 1 1 1 0 0|2 1 0 0 1 2 2 0 0|4 3 2 1 1 2 2 0 0|5 4 4 3 2 3 3 1 0|1 2 4 4 4 4 3 1 0|1 1 2 6 6 9 7 3 1|0 0 1 3 5 5 2 0 1|0 0 0 0 0 1 0 1 2|1 1 0 0 0 1 1 3 3|3 2 1 1 0 0 0 2 3|4 4 1 2 0 0 0 2 3|0 0 3 3 3 0 0 2 3|0 0 2 5 2 1 0 1 2|0 1 3 6 4 2 0 1 1|0 2 5 5 5 1 0 1 1|1 2 5 4 2 0 1 1 2|0 1 4 3 1 0 1 1 2|0 1 2 1 0 2 2 1 1|0 1 7 11 10 8 5 1 0|2 4 15 26 30 22 8 3 0|2 4 15 25 27 20 8 3 1|0 0 2 5 5 4 2 0 0|0 0 0 0 0 0 0 2 1|3 2 0 0 0 0 0 0 1|8 7 2 0 0 0 0 1 2|8 9 3 0 0 0 1 1 2|9 12 9 6 1 1 1 2 2|9 12 13 8 3 1 0 1 1|1 2 4 3 2 1 1 0 0|1 1 2 2 2 1 1 0 0|0 0 2 2 4 6 5 1 0|0 0 0 0 1 1 0 0 0|0 0 0 0 0 0 0 0 0|4 4 3 5 4 5 3 3 3|5 4 4 6 8 8 6 4 3|2 2 5 9 17 22 22 14 12|1 1 2 5 10 16 17 9 6|8 8 4 2 5 12 15 8 5|20 22 15 3 3 9 13 5 6|26 42 48 38 30 24 17 7 6|26 42 57 60 52 42 20 8 6|26 42 57 58 50 38 20 8 7|18 15 22 26 35 25 12 4 3|0 0 1 4 10 5 6 1 0|4 6 12 24 22 8 3 1 0|8 10 18 20 18 10 4 1 0|20 23 27 24 12 5 2 0 0|10 10 18 15 5 2 1 0 0|1 4 12 10 3 0 0 0 0|1 4 20 22 12 3 0 0 0|2 8 30 34 24 12 4 1 1|2 12 38 42 32 16 7 3 1|40 68 88 98 82 45 25 10 3|40 68 94 100 88 45 28 10 5|22 45 75 78 68 55 30 12 8|20 40 65 68 66 62 45 25 18|32 38 50 60 62 66 55 40 40|10 5 2 2 8 20 25 18 12|8 2 0 0 2 8 10 9 8|12 8 0 0 0 4 8 8 8|15 12 8 4 1 1 2 5 5|4 3 1 0 0 0 0 1 2|2 3 4 3 1 0 0 2 3|22 22 28 18 14 8 7 6 5|78 76 66 45 20 10 8 7 7|58 58 42 22 8 2 1 1 1|50 46 36 18 6 1 0 0 0`.split('|').map(r => r.split(' ').map(Number));
const magma = [[0, 0, 4], [20, 14, 54], [59, 15, 112], [100, 26, 128], [140, 41, 129], [183, 55, 121], [222, 73, 104], [247, 112, 92], [254, 159, 109], [254, 207, 146], [252, 253, 191]];
function color(v) {
  const i = Math.min(9, Math.floor(v / 10)), f = v / 10 - i;
  return `rgb(${magma[i].map((c, n) => Math.round(c + (magma[i + 1][n] - c) * f))})`;
}
const defs = add('defs', {});
const rowHeight = 361 / power.length;
power.forEach((row, r) => {
  const gradient = add('linearGradient', { id: 'row' + r }, undefined, defs);
  for (let k = 0; k <= 32; k++) {
    const i = Math.min(7, Math.floor(k / 4)), f = k / 4 - i;
    add('stop', { offset: k / 32, 'stop-color': color(row[i] + (row[i + 1] - row[i]) * f) }, undefined, gradient);
  }
  add('rect', { x: X0, y: 1319.5 + r * rowHeight, width: RIGHT - X0, height: rowHeight, fill: `url(#row${r})` });
});

['7.28', '8.7', '10.41', '12.45', '14.88', '17.79', '21.28', '25.44', '30.42', '36.37', '43.49', '52'].forEach((t, i) => {
  add('text', { x: 723, y: Math.round(1326 + i * 32.4), 'text-anchor': 'end' }, t);
});
const wl = add('text', { class: 'axis-title', 'text-anchor': 'middle', transform: 'translate(677 1500) rotate(-90)' });
add('tspan', { 'font-weight': 700 }, 'Wavelength', wl);
add('tspan', {}, ' (Days)', wl);
add('text', { class: 'time-title', x: 1804, y: 1741, 'text-anchor': 'middle' }, 'Time');

add('rect', { class: 'band', x: 738.5, y: 1575.5, width: 1938, height: 65 });
add('path', { class: 'mean-freq', d: path(pairs('738,1631 783,1634 829,1636 864,1635 915,1631 972,1625 1048,1616 1125,1610 1206,1604 1257,1599.5 1298,1593 1329,1587 1354,1585.6 1375,1586.5 1405,1591 1448,1597 1496,1601 1591,1605 1735,1609.7 1831,1612 1974,1615 2022,1616.4 2070,1614.7 2098,1611 2122,1609.7 2150,1612 2176,1616.4 2263,1620.6 2304,1626.5 2330,1632.4 2350,1639 2360,1640 2520,1640 2534,1639 2559,1631 2595,1623 2676,1612')) });

// phase ladder beside the band
['#2c0000', '#2c0000', '#2c0000', '#2c0000', '#0a2c10', '#4fd674', '#15552a', '#9a352d', '#e0564a', '#f0483c', '#a53a30', '#c8453a', '#2c0000'].forEach((fill, i) => {
  add('rect', { x: 2682, y: 1574 + i * 5.4, width: 32, height: 3.6, fill });
});

// notes: x, y, width, anchor, parts (leading * marks bold, ^ a symbol)
[
  [2458, 1137, 219, 'end', ['~~', '* AM:', ' 26.42539      ', '^✴', '* Max:', ' 42.98004']],
  [2535, 1253, 142, 'end', ['~~', '* Avg. Amp:', ' 34.23537']],
  [2314, 1550, 363, 'end', ['~~', '* FM:', ' 10.95 days ', '^◉', '* BP Phase:', ' Early Peak ', '^↪', ' Sell Zone']],
  [2553, 1642, 124, 'end', ['~~', '* Avg:', ' 36.02 days']],
  [738, 1550, 87, 'start', ['*↑ 29.53', ' days']],
  [738, 1642, 87, 'start', ['*↓ 42.21', ' days']]
].forEach(([x, y, w, anchor, parts]) => {
  add('rect', { class: 'note', x, y, width: w, height: 24 });
  const phase = w === 363;
  const t = add('text', { class: 'note-text', x: anchor === 'end' ? x + w - (phase ? 26 : 5) : x + 6, y: y + 16, 'text-anchor': anchor });
  parts.forEach(p => {
    if (p[0] === '*') add('tspan', {}, p.slice(1), t);
    else if (p[0] === '^') add('tspan', { class: 'sign' }, p.slice(1), t);
    else t.appendChild(document.createTextNode(p));
  });
  if (phase) add('circle', { cx: x + w - 13, cy: y + 12, r: 6.5, fill: '#fa6a0a', stroke: '#111111' });
});
```
